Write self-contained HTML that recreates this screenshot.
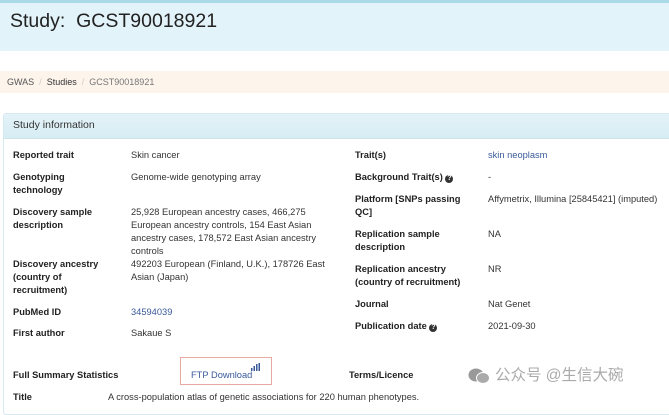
<!DOCTYPE html><html><head><style>
body{margin:0;width:669px;height:406px;overflow:hidden;background:#fff;font-family:"Liberation Sans",Arial,sans-serif;position:relative;color:#333}
.a{position:absolute;font-size:9.3px;line-height:13px;white-space:nowrap}
.b{font-weight:bold;color:#222}
.l{color:#3a5a9a}
.q{display:inline-block;width:8px;height:8px;border-radius:50%;background:#333;color:#fff;font-size:7px;line-height:8px;text-align:center;vertical-align:0px}
</style></head><body>
<div style="position:absolute;left:0;top:0;width:669px;height:3px;background:#a9d8e6"></div>
<div style="position:absolute;left:0;top:3px;width:669px;height:48px;background:#e2f3f9"></div>
<div class="a" style="left:10px;top:9px;font-size:19.5px;line-height:24px;color:#222">Study:&nbsp; GCST90018921</div>
<div style="position:absolute;left:0;top:71px;width:669px;height:22px;background:#fdf4ec"></div>
<div class="a" style="left:7px;top:76px;font-size:9px;color:#555">GWAS <span style="color:#ccc">&nbsp;/&nbsp;</span> <span style="color:#333">Studies</span> <span style="color:#ccc">&nbsp;/&nbsp;</span> <span style="color:#777">GCST90018921</span></div>
<div style="position:absolute;left:3px;top:113px;width:670px;height:300px;border:1px solid #d6e9ef;border-radius:3px"></div>
<div style="position:absolute;left:4px;top:114px;width:669px;height:24px;background:linear-gradient(#e4f3f8,#d6edf4);border-bottom:1px solid #cde4ec"></div>
<div class="a" style="left:13px;top:119px;font-size:10.5px;color:#333">Study information</div>

<div class="a b" style="left:13px;top:149px">Reported trait</div>
<div class="a" style="left:131px;top:149px">Skin cancer</div>
<div class="a b" style="left:13px;top:171px">Genotyping<br>technology</div>
<div class="a" style="left:131px;top:171px">Genome-wide genotyping array</div>
<div class="a b" style="left:13px;top:206px">Discovery sample<br>description</div>
<div class="a" style="left:131px;top:206px">25,928 European ancestry cases, 466,275<br>European ancestry controls, 154 East Asian<br>ancestry cases, 178,572 East Asian ancestry<br>controls</div>
<div class="a b" style="left:13px;top:258px">Discovery ancestry<br>(country of<br>recruitment)</div>
<div class="a" style="left:131px;top:258px">492203 European (Finland, U.K.), 178726 East<br>Asian (Japan)</div>
<div class="a b" style="left:13px;top:306px">PubMed ID</div>
<div class="a l" style="left:131px;top:306px">34594039</div>
<div class="a b" style="left:13px;top:327px">First author</div>
<div class="a" style="left:131px;top:327px">Sakaue S</div>

<div class="a b" style="left:355px;top:149px">Trait(s)</div>
<div class="a l" style="left:488px;top:149px">skin neoplasm</div>
<div class="a b" style="left:355px;top:171px">Background Trait(s) <span class="q">?</span></div>
<div class="a" style="left:488px;top:171px">-</div>
<div class="a b" style="left:355px;top:193px">Platform [SNPs passing<br>QC]</div>
<div class="a" style="left:488px;top:193px">Affymetrix, Illumina [25845421] (imputed)</div>
<div class="a b" style="left:355px;top:228px">Replication sample<br>description</div>
<div class="a" style="left:488px;top:228px">NA</div>
<div class="a b" style="left:355px;top:263px">Replication ancestry<br>(country of recruitment)</div>
<div class="a" style="left:488px;top:263px">NR</div>
<div class="a b" style="left:355px;top:298px">Journal</div>
<div class="a" style="left:488px;top:298px">Nat Genet</div>
<div class="a b" style="left:355px;top:320px">Publication date <span class="q">?</span></div>
<div class="a" style="left:488px;top:320px">2021-09-30</div>

<div class="a b" style="left:13px;top:369px">Full Summary Statistics</div>
<div style="position:absolute;left:180px;top:357px;width:90px;height:26px;border:1px solid #e8a9a2"></div>
<div class="a l" style="left:191px;top:369px">FTP Download</div>
<svg style="position:absolute;left:251px;top:363px" width="9" height="8"><rect x="0" y="5" width="1.5" height="3" fill="#3a5a9a"/><rect x="2.5" y="3" width="1.5" height="5" fill="#3a5a9a"/><rect x="5" y="1" width="1.5" height="7" fill="#3a5a9a"/><rect x="7.5" y="0" width="1.5" height="8" fill="#3a5a9a"/></svg>
<div class="a b" style="left:349px;top:369px">Terms/Licence</div>
<svg style="position:absolute;left:468px;top:367px" width="22" height="18"><ellipse cx="8" cy="8" rx="7.5" ry="6.5" fill="#999"/><ellipse cx="15" cy="11" rx="6.5" ry="5.5" fill="#aaa" stroke="#fff" stroke-width="1"/></svg>
<div class="a" style="left:495px;top:366px;font-family:'Liberation Sans','Noto Sans CJK SC',sans-serif;font-size:15.5px;line-height:19px;color:#aaa">公众号 @生信大碗</div>
<div class="a b" style="left:13px;top:391px">Title</div>
<div class="a" style="left:108px;top:391px">A cross-population atlas of genetic associations for 220 human phenotypes.</div>
</body></html>
